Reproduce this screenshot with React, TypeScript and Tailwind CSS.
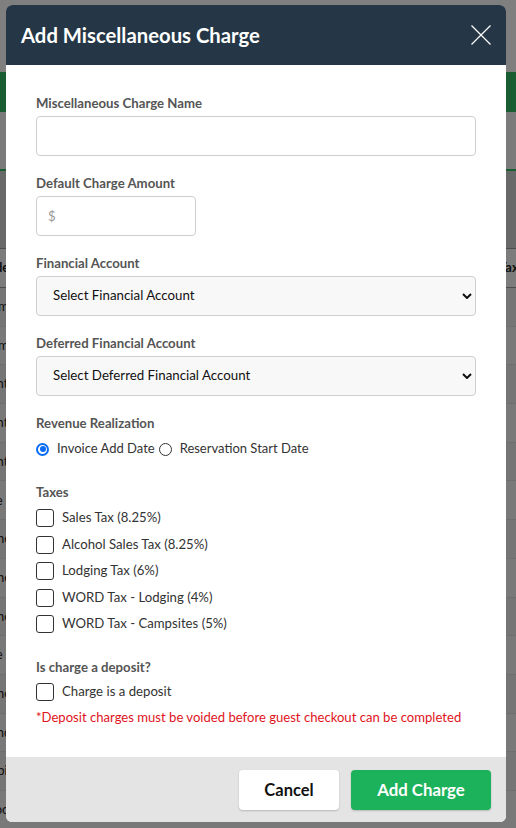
import { useState } from "react";

const taxes = [
  "Sales Tax (8.25%)",
  "Alcohol Sales Tax (8.25%)",
  "Lodging Tax (6%)",
  "WORD Tax - Lodging (4%)",
  "WORD Tax - Campsites (5%)",
];

const bgRows = [
  "Comfort",
  "Comfort",
  "Rental",
  "Rental",
  "Rental",
  "Fee",
  "Other",
  "Other",
  "Other",
  "Fee",
  "Other",
  "Vendor",
  "Cabin C",
  "Wood",
];

function Checkbox({ label }: { label: string }) {
  const [checked, setChecked] = useState(false);
  return (
    <label className="flex h-[18px] cursor-pointer items-center gap-[8px]">
      <span
        onClick={() => setChecked(!checked)}
        className={`h-[18px] w-[18px] shrink-0 rounded-[3px] border border-[#333] ${
          checked ? "bg-[#0a6cf5]" : "bg-white"
        }`}
      />
      <span className="text-[13.2px] text-[#333]">{label}</span>
    </label>
  );
}

function Radio({ label, checked, onSelect }: { label: string; checked: boolean; onSelect: () => void }) {
  return (
    <label onClick={onSelect} className="flex cursor-pointer items-center gap-[8px]">
      {checked ? (
        <span className="flex h-[13px] w-[13px] items-center justify-center rounded-full border-2 border-[#0a6cf5]">
          <span className="h-[6px] w-[6px] rounded-full bg-[#0a6cf5]" />
        </span>
      ) : (
        <span className="h-[13px] w-[13px] rounded-full border border-[#333]" />
      )}
      <span className="text-[13px] text-[#333]">{label}</span>
    </label>
  );
}

function Select({ placeholder }: { placeholder: string }) {
  return (
    <div className="relative">
      <select className="h-[40px] w-full appearance-none rounded-[4px] border border-[#cfcfcf] bg-[#f8f8f8] pl-[16px] text-[13.3px] text-[#111] outline-none">
        <option>{placeholder}</option>
      </select>
      <svg
        className="pointer-events-none absolute right-[4px] top-[17px]"
        width="10"
        height="6"
        viewBox="0 0 10 6"
        fill="none"
      >
        <path d="M1 1l4 4 4-4" stroke="#111" strokeWidth="2" />
      </svg>
    </div>
  );
}

function FieldLabel({ children, className = "mb-[5px]" }: { children: string; className?: string }) {
  return <div className={`text-[13.2px] font-bold leading-[15px] text-[#555] ${className}`}>{children}</div>;
}

export default function App() {
  const [realization, setRealization] = useState("invoice");

  return (
    <div
      className="relative h-[828px] w-full overflow-hidden bg-white"
      style={{ fontFamily: "Lato, 'Open Sans', sans-serif" }}
    >
      {/* page behind the modal */}
      <div className="h-[72px] bg-white" />
      <div className="h-[40px] bg-[#36bb67]" />
      <div className="h-[59px] border-b-2 border-[#36bb67] bg-[#f6f6f6]" />
      <div className="h-[77px] bg-[#d2d2d2]" />
      <div className="flex h-[40px] items-center border-y border-[#999] bg-[#f9f9f9] text-[13px] font-bold text-[#222]">
        <span className="-ml-[21px] w-[520px] shrink-0">Code</span>
        <span>Taxes</span>
      </div>
      {bgRows.map((row, i) => (
        <div
          key={i}
          className={`flex h-[38.7px] items-center border-b border-[#ddd] text-[13px] text-[#222] ${
            i % 2 === 0 ? "bg-[#eaeaea]" : "bg-[#f2f2f2]"
          }`}
        >
          <span className="-ml-[18px]">{row}</span>
        </div>
      ))}

      <div className="absolute inset-0 bg-black/50" />

      {/* modal */}
      <div className="absolute left-[6px] top-[5px] w-[500px] overflow-hidden rounded-[6px] bg-white">
        <div className="flex h-[60px] items-center justify-between bg-[#253746] px-[15px]">
          <h2 className="text-[20.3px] font-bold text-white">Add Miscellaneous Charge</h2>
          <button className="h-[20px] w-[20px]">
            <svg width="20" height="20" viewBox="0 0 20 20" fill="none">
              <path d="M0.5 0.5L19.5 19.5M19.5 0.5L0.5 19.5" stroke="#fff" strokeWidth="1.2" />
            </svg>
          </button>
        </div>

        <div className="px-[30px] pb-[32px] pt-[31px]">
          <div>
            <FieldLabel>Miscellaneous Charge Name</FieldLabel>
            <input className="h-[40px] w-full rounded-[4px] border border-[#cfcfcf] px-[11px] text-[13.3px] outline-none" />
          </div>

          <div className="mt-[20px]">
            <FieldLabel>Default Charge Amount</FieldLabel>
            <input
              placeholder="$"
              className="h-[40px] w-[160px] rounded-[4px] border border-[#cfcfcf] px-[11px] text-[13.3px] outline-none placeholder:text-[#999]"
            />
          </div>

          <div className="mt-[20px]">
            <FieldLabel>Financial Account</FieldLabel>
            <Select placeholder="Select Financial Account" />
          </div>

          <div className="mt-[20px]">
            <FieldLabel>Deferred Financial Account</FieldLabel>
            <Select placeholder="Select Deferred Financial Account" />
          </div>

          <div className="mt-[20px]">
            <FieldLabel className="mb-[10px]">Revenue Realization</FieldLabel>
            <div className="flex h-[16px] items-center gap-[4px]">
              <Radio
                label="Invoice Add Date"
                checked={realization === "invoice"}
                onSelect={() => setRealization("invoice")}
              />
              <Radio
                label="Reservation Start Date"
                checked={realization === "reservation"}
                onSelect={() => setRealization("reservation")}
              />
            </div>
          </div>

          <div className="mt-[28px]">
            <FieldLabel className="mb-[9px]">Taxes</FieldLabel>
            <div className="flex flex-col gap-[8.5px]">
              {taxes.map((t) => (
                <Checkbox key={t} label={t} />
              ))}
            </div>
          </div>

          <div className="mt-[27px]">
            <FieldLabel className="mb-[8px]">Is charge a deposit?</FieldLabel>
            <Checkbox label="Charge is a deposit" />
            <p className="mt-[9px] text-[13.1px] leading-[15px] text-[#e0141c]">
              *Deposit charges must be voided before guest checkout can be completed
            </p>
          </div>
        </div>

        <div className="flex justify-end gap-[12px] bg-[#e4e4e4] px-[15px] pb-[12px] pt-[13px]">
          <button className="h-[40px] w-[100px] rounded-[4px] bg-white text-[16.5px] font-bold text-[#111] shadow-[0_1px_2px_rgba(0,0,0,0.2)]">
            Cancel
          </button>
          <button className="h-[40px] w-[140px] rounded-[4px] bg-[#1cb25b] text-[16.8px] font-bold text-white shadow-[0_1px_2px_rgba(0,0,0,0.2)]">
            Add Charge
          </button>
        </div>
      </div>
    </div>
  );
}
